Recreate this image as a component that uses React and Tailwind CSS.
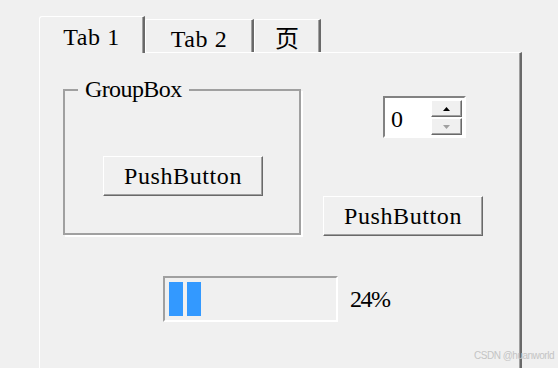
import React from "react";

const raised =
    "bg-[#f0f0f0] border border-t-white border-l-white border-b-[#696969] border-r-[#696969] shadow-[inset_-1px_-1px_0_#a0a0a0]";

const PushButton = ({ className = "" }) => (
    <button
        type="button"
        className={`${raised} w-[160px] h-[40px] flex items-center justify-center text-black tracking-[0.6px] ${className}`}
    >
        PushButton
    </button>
);

const SpinBox = () => (
    <div className="ml-[60px] mt-[43px] w-[83px] h-[42px] border-2 border-t-[#828282] border-l-[#828282] border-b-white border-r-white bg-white flex">
        <div className="flex-1 flex items-center pl-[6px] pt-[4px]">0</div>
        <div className="flex flex-col gap-px pt-[2px] pr-[2px]">
            <div className={`${raised} w-[31px] h-[17px] flex items-center justify-center`}>
                <svg width="7" height="4" viewBox="0 0 7 4">
                    <polygon points="0,4 3.5,0 7,4" fill="#000" />
                </svg>
            </div>
            <div className={`${raised} w-[31px] h-[17px] flex items-center justify-center`}>
                <svg width="7" height="4" viewBox="0 0 7 4">
                    <polygon points="0,0 7,0 3.5,4" fill="#a0a0a0" />
                </svg>
            </div>
        </div>
    </div>
);

const App = () => {
    const progress = 24;
    const chunks = 2;

    return (
        <div
            className="relative w-[558px] h-[368px] overflow-hidden bg-[#f0f0f0] pl-[39px] pt-[16px] text-[24px] leading-[28px] text-black"
            style={{ fontFamily: '"Liberation Serif", "Noto Sans CJK SC", serif' }}
        >
            {/* tab bar */}
            <div className="relative z-10 flex items-end h-[37px]">
                <div className="w-[106px] h-[37px] bg-[#f0f0f0] border-l border-t border-r-2 border-l-white border-t-white border-r-[#696969] shadow-[inset_-1px_0_0_#a0a0a0] rounded-tl-[3px] flex justify-center pt-[6px] tracking-[0.6px]">
                    Tab 1
                </div>
                <div className="w-[109px] h-[33px] mb-px bg-[#f0f0f0] border-l border-t border-r-2 border-l-white border-t-white border-r-[#696969] shadow-[inset_-1px_0_0_#a0a0a0] rounded-tl-[2px] flex justify-center pt-[5px] tracking-[0.6px]">
                    Tab 2
                </div>
                <div className="w-[67px] h-[33px] mb-px bg-[#f0f0f0] border-l border-t border-r-2 border-l-white border-t-white border-r-[#696969] shadow-[inset_-1px_0_0_#a0a0a0] rounded-tl-[2px] flex justify-center pt-[5px]">
                    页
                </div>
            </div>

            {/* tab pane */}
            <div className="-mt-px w-[483px] h-[320px] border-l border-t border-r-2 border-l-white border-t-white border-r-[#696969] shadow-[inset_-1px_0_0_#a0a0a0]">
                <div className="flex items-start">
                    <div className="relative ml-[23px] mt-[36px] w-[238px] h-[146px] border-2 border-[#a0a0a0] shadow-[2px_2px_0_#fff] flex justify-center pt-[65px] pl-[2px]">
                        <span className="absolute left-[13px] top-[-16px] px-[7px] bg-[#f0f0f0] tracking-[-0.6px]">
                            GroupBox
                        </span>
                        <PushButton />
                    </div>

                    <div className="ml-[22px] flex flex-col">
                        <SpinBox />
                        <PushButton className="mt-[58px]" />
                    </div>
                </div>

                <div className="ml-[123px] mt-[40px] flex items-center">
                    <div className="w-[175px] h-[46px] border-2 border-t-[#a0a0a0] border-l-[#a0a0a0] border-b-white border-r-white bg-[#f0f0f0] p-[4px] flex gap-[4px]">
                        {Array.from({ length: chunks }).map((_, i) => (
                            <div key={i} className="w-[14px] h-full bg-[#3399ff]" />
                        ))}
                    </div>
                    <span className="ml-[12px] tracking-[-1.5px]">{progress}%</span>
                </div>
            </div>

            <div
                className="absolute right-[4px] bottom-[6px] text-[10px] leading-[12px] tracking-[-0.5px] text-[#c4c4c4]"
                style={{ fontFamily: '"Liberation Sans", Arial, sans-serif' }}
            >
                CSDN @huanworld
            </div>
        </div>
    );
};

export default App;
